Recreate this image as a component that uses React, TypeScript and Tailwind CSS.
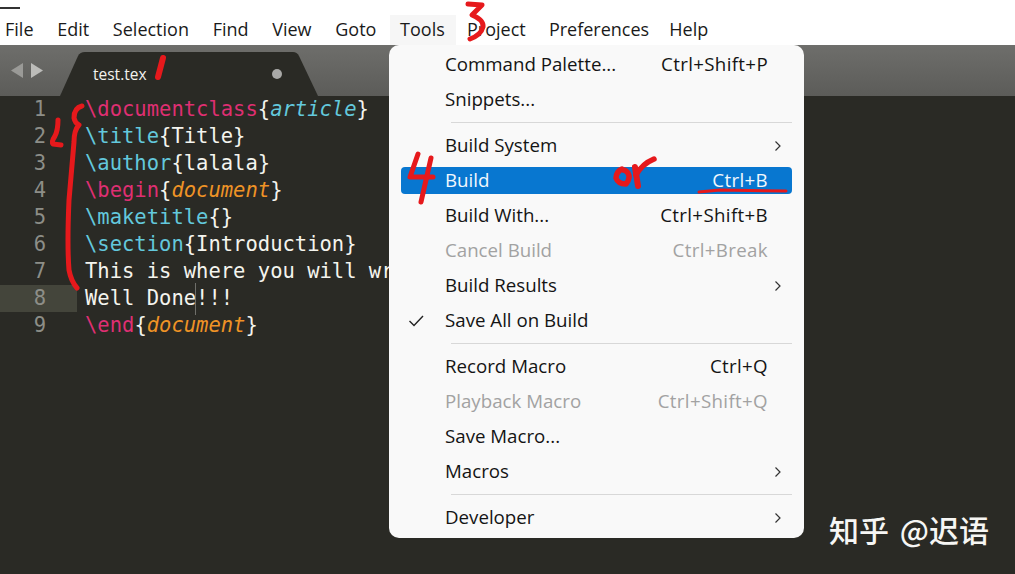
const UI = "font-['Open_Sans','Noto_Sans',sans-serif]";

type Tok = { t: string; c: "p" | "b" | "i" | "o" | "w" };
const colors: Record<Tok["c"], string> = {
  p: "text-[#df2f72]",
  b: "text-[#63c8dc]",
  i: "text-[#63c8dc] italic",
  o: "text-[#ef9326] italic",
  w: "text-[#f4f4ee]",
};

const lines: Tok[][] = [
  [{ t: "\\documentclass", c: "p" }, { t: "{", c: "w" }, { t: "article", c: "i" }, { t: "}", c: "w" }],
  [{ t: "\\title", c: "b" }, { t: "{Title}", c: "w" }],
  [{ t: "\\author", c: "b" }, { t: "{lalala}", c: "w" }],
  [{ t: "\\begin", c: "p" }, { t: "{", c: "w" }, { t: "document", c: "o" }, { t: "}", c: "w" }],
  [{ t: "\\maketitle", c: "b" }, { t: "{}", c: "w" }],
  [{ t: "\\section", c: "b" }, { t: "{Introduction}", c: "w" }],
  [{ t: "This is where you will write", c: "w" }],
  [{ t: "Well Done!!!", c: "w" }],
  [{ t: "\\end", c: "p" }, { t: "{", c: "w" }, { t: "document", c: "o" }, { t: "}", c: "w" }],
];

const menuBar = [
  { t: "File", m: "" },
  { t: "Edit", m: "" },
  { t: "Selection", m: "" },
  { t: "Find", m: "" },
  { t: "View", m: "" },
  { t: "Goto", m: "" },
  { t: "Tools", m: "" },
  { t: "Project", m: "ml-[-1.5px]" },
  { t: "Preferences", m: "ml-[-0.5px]" },
  { t: "Help", m: "ml-[-3.5px]" },
];

type Item = { sep?: boolean; label?: string; key?: string; sub?: boolean; off?: boolean; on?: boolean; check?: boolean };
const items: Item[] = [
  { label: "Command Palette...", key: "Ctrl+Shift+P" },
  { label: "Snippets..." },
  { sep: true },
  { label: "Build System", sub: true },
  { label: "Build", key: "Ctrl+B", on: true },
  { label: "Build With...", key: "Ctrl+Shift+B" },
  { label: "Cancel Build", key: "Ctrl+Break", off: true },
  { label: "Build Results", sub: true },
  { label: "Save All on Build", check: true },
  { sep: true },
  { label: "Record Macro", key: "Ctrl+Q" },
  { label: "Playback Macro", key: "Ctrl+Shift+Q", off: true },
  { label: "Save Macro..." },
  { label: "Macros", sub: true },
  { sep: true },
  { label: "Developer", sub: true },
];

function Chevron() {
  return (
    <svg width="8" height="12" viewBox="0 0 8 12" className="absolute right-[10px] top-[8px]">
      <path d="M1.5 1.5 L6 6 L1.5 10.5" fill="none" stroke="#333" strokeWidth="1.2" />
    </svg>
  );
}

function MenuRow({ item }: { item: Item }) {
  if (item.sep) {
    return (
      <div className="h-[11px] flex items-center pl-[62px] pr-[12px]">
        <div className="h-px w-full bg-[#d8d8d8]" />
      </div>
    );
  }
  const tone = item.on ? "bg-[#0877d0] text-[#f2f8fd]" : item.off ? "text-[#a2a2a2]" : "text-[#141414]";
  return (
    <div className="h-[35px] px-[12px] py-[4px]">
      <div className={`relative h-[27px] flex items-center rounded-[4px] pl-[44px] pr-[24px] pb-[2px] justify-between ${tone}`}>
        {item.check && (
          <svg width="16" height="12" viewBox="0 0 16 12" className="absolute left-[7px] top-[8px]">
            <path d="M1.5 6 L6 10.5 L15 1" fill="none" stroke="#222" strokeWidth="1.4" />
          </svg>
        )}
        <span>{item.label}</span>
        {item.key && <span className="tracking-[0.35px]">{item.key}</span>}
        {item.sub && <Chevron />}
      </div>
    </div>
  );
}

export default function App() {
  return (
    <div className="relative w-[1015px] h-[574px] overflow-hidden bg-[#2a2a25] flex flex-col">
      <div className={`relative h-[45px] bg-white shrink-0 flex items-end pl-[5px] gap-[23.7px] pb-[3px] text-[18px] text-[#1a1a1a] leading-[26px] ${UI}`}>
        <div className="absolute left-0 top-[7px] w-[20px] h-[2px] bg-[#333]" />
        <div className="absolute left-[390px] top-[15px] w-[66px] h-[30px] bg-[#f6f6f6]" />
        {menuBar.map((m) => (
          <span key={m.t} className={`relative ${m.m}`}>{m.t}</span>
        ))}
      </div>

      <div className="relative h-[51px] shrink-0 bg-gradient-to-b from-[#6e6e6b] to-[#5c5c59]">
        <svg width="34" height="16" viewBox="0 0 34 16" className="absolute left-[10px] top-[18px]">
          <path d="M13 0 V15 L1 7.5 Z" fill="#9a9a97" />
          <path d="M21 0 V15 L33 7.5 Z" fill="#bcbcb9" />
        </svg>
        <svg width="262" height="44" viewBox="0 0 262 44" className="absolute left-[60px] top-[7px]">
          <path d="M0 44 L18 4 Q20 0 25 0 L233 0 Q237 0 239 4 L258 44 Z" fill="#2a2a25" />
        </svg>
        <span className={`absolute left-[93px] top-[19px] text-[15.5px] leading-[20px] text-[#f2f2ee] ${UI}`}>test.tex</span>
        <div className="absolute left-[272px] top-[24px] w-[10px] h-[10px] rounded-full bg-[#a9a9a7]" />
      </div>

      <div className="font-['DejaVu_Sans_Mono','Liberation_Mono',monospace] text-[20.5px] leading-[27px]">
        {lines.map((toks, i) => (
          <div key={i} className="flex h-[27px] whitespace-pre">
            <div className={`w-[77px] pr-[31px] text-right text-[#8d8e88] ${i === 7 ? "bg-[#44453b]" : ""}`}>{i + 1}</div>
            <div className="relative ml-[8px]">
              {toks.map((k, j) => (
                <span key={j} className={colors[k.c]}>{k.t}</span>
              ))}
              {i === 7 && <div className="absolute left-[110px] top-[-2px] w-px h-[32px] bg-[#6f6f6a]" />}
            </div>
          </div>
        ))}
      </div>

      <div className={`absolute left-[389px] top-[45px] w-[415px] h-[493px] bg-[#f9f9f9] rounded-[10px] pt-[2px] text-[18.7px] leading-[26px] ${UI}`}>
        {items.map((it, i) => (
          <MenuRow key={i} item={it} />
        ))}
      </div>

      <div className="absolute left-[829px] top-[509px] text-[#f6f6f4] text-[30px] leading-[40px] font-medium font-['Noto_Sans_CJK_SC',sans-serif] [word-spacing:4px]">
        知乎 @迟语
      </div>

      <svg width="1015" height="574" viewBox="0 0 1015 574" className="absolute left-0 top-0 pointer-events-none" fill="none" stroke="#e6191c" strokeLinecap="round" strokeLinejoin="round">
        <path d="M82 106 Q74 108 74 118 Q75 123 79 125 Q74 130 74 142 L69 200 Q67 245 69 270 Q71 281 77 288" strokeWidth="5" />
        <path d="M58 120 Q58 130 55 136 Q51 142 53 144 L61 145" strokeWidth="5" />
        <path d="M163 58 L158 77" strokeWidth="6" />
        <path d="M468 4 L482 5 L472 15 Q484 20 483 27 Q481 35 470 39" strokeWidth="5" />
        <path d="M418 154 L410 177 L433 177" strokeWidth="5" />
        <path d="M431 158 Q426 180 421 202" strokeWidth="5" />
        <path d="M622 169 Q616 172 616 178 Q618 184 626 184 Q631 178 628 173 Q625 169 620 170" strokeWidth="5.5" />
        <path d="M635 167 L638 186" strokeWidth="6" />
        <path d="M636 175 Q642 164 654 159" strokeWidth="5.5" />
        <path d="M699 192 L720 190 L786 191" strokeWidth="3" />
      </svg>
    </div>
  );
}
